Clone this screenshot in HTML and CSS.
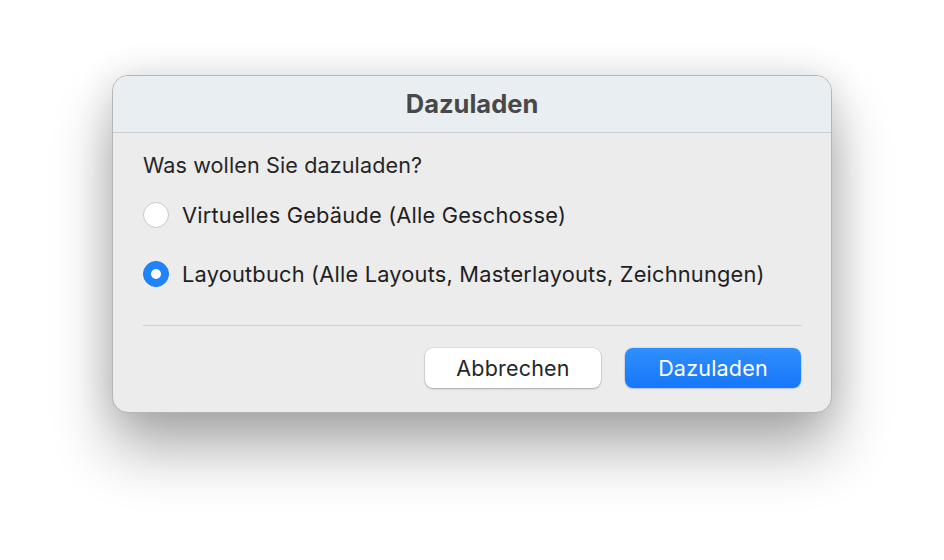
FILE: index.html
```html
<!DOCTYPE html>
<html lang="de">
<head>
<meta charset="utf-8">
<link rel="stylesheet" href="styles.css">
</head>
<body>
<div class="stage">
  <div class="dialog">
    <div class="titlebar">Dazuladen</div>
    <div class="content">
      <p class="question">Was wollen Sie dazuladen?</p>
      <label class="option">
        <span class="radio"></span>
        <span class="label-text">Virtuelles Gebäude (Alle Geschosse)</span>
      </label>
      <label class="option">
        <span class="radio checked"></span>
        <span class="label-text">Layoutbuch (Alle Layouts, Masterlayouts, Zeichnungen)</span>
      </label>
      <div class="divider"></div>
      <div class="buttons">
        <button class="btn btn-secondary">Abbrechen</button>
        <button class="btn btn-primary">Dazuladen</button>
      </div>
    </div>
  </div>
</div>
</body>
</html>
```

FILE: styles.css
```css
html, body {
  margin: 0;
  padding: 0;
  background: #ffffff;
  width: 944px;
  height: 560px;
  overflow: hidden;
}

.stage {
  padding: 75px 0 0 112px;
  font-family: Inter, "Open Sans", "Liberation Sans", sans-serif;
}

.dialog {
  width: 720px;
  height: 338px;
  box-sizing: border-box;
  border-radius: 16px;
  background: #ececec;
  border: 1px solid #b5b5b5;
  box-shadow: 0 36px 60px rgba(0, 0, 0, 0.32), 0 0 36px rgba(0, 0, 0, 0.12);
  overflow: hidden;
  display: flex;
  flex-direction: column;
}

.titlebar {
  height: 57px;
  box-sizing: border-box;
  flex: none;
  background: #e9eef2;
  border-bottom: 1px solid #c9cbcd;
  display: flex;
  align-items: center;
  justify-content: center;
  font-weight: 700;
  font-size: 25.5px;
  color: #484848;
  padding-bottom: 2px;
}

.content {
  padding: 0 29px 0 30px;
  display: flex;
  flex-direction: column;
}

.question {
  margin: 19px 0 0 0;
  font-size: 21.6px;
  line-height: 26px;
  height: 26px;
  color: #262626;
  letter-spacing: 0.1px;
}

.option {
  display: flex;
  align-items: center;
  gap: 13px;
  font-size: 21.8px;
  letter-spacing: 0.2px;
  color: #1f1f1f;
  height: 28px;
}

.question + .option {
  margin-top: 23px;
}

.option + .option {
  margin-top: 31px;
}

.radio {
  width: 26px;
  height: 26px;
  box-sizing: border-box;
  border-radius: 50%;
  background: #ffffff;
  border: 1px solid #c8c8c8;
  flex: none;
  display: flex;
  align-items: center;
  justify-content: center;
}

.radio.checked {
  background: #1f84fb;
  border-color: #1a7cf0;
}

.radio.checked::after {
  content: "";
  width: 10px;
  height: 10px;
  border-radius: 50%;
  background: #ffffff;
}

.divider {
  margin-top: 37px;
  height: 1px;
  background: #d0d0d0;
}

.buttons {
  margin-top: 22px;
  display: flex;
  justify-content: flex-end;
  gap: 24px;
  padding-right: 1px;
}

.btn {
  width: 176px;
  height: 40px;
  border-radius: 8px;
  font-family: inherit;
  font-size: 21.5px;
  letter-spacing: 0.2px;
  border: none;
  padding: 0;
}

.btn-secondary {
  background: #ffffff;
  color: #262626;
  box-shadow: 0 0 0 0.5px rgba(0, 0, 0, 0.12), 0 1px 2px rgba(0, 0, 0, 0.25);
}

.btn-primary {
  background: linear-gradient(#2f8ffc, #1677fa);
  color: #ffffff;
  box-shadow: 0 0 0 0.5px rgba(0, 90, 220, 0.2), 0 1px 2px rgba(0, 0, 0, 0.15);
}
```
